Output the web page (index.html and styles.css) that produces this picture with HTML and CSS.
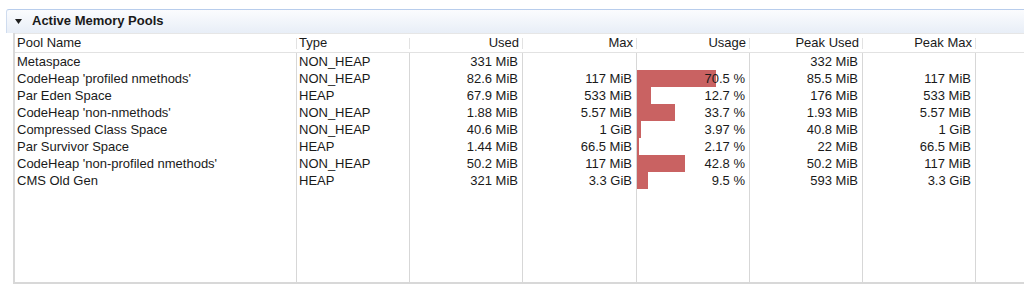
FILE: index.html
```html
<!DOCTYPE html>
<html>
<head>
<meta charset="utf-8">
<link rel="stylesheet" href="styles.css">
</head>
<body>
<div class="pools">
  <div class="section-head">
    <svg class="twisty" width="7" height="5" viewBox="0 0 7 5"><polygon points="0,0 7,0 3.5,5" fill="#1f1f1f"/></svg>
    <span class="title">Active Memory Pools</span>
  </div>
  <div class="table-box">
    <table class="grid">
      <colgroup>
        <col class="c-name"><col class="c-std"><col class="c-std"><col class="c-max"><col class="c-std"><col class="c-std"><col class="c-std"><col class="c-rest">
      </colgroup>
      <thead>
        <tr>
          <th class="l">Pool Name</th>
          <th class="l">Type</th>
          <th>Used</th>
          <th>Max</th>
          <th>Usage</th>
          <th>Peak Used</th>
          <th>Peak Max</th>
          <th class="last"></th>
        </tr>
      </thead>
      <tbody>
        <tr><td class="l">Metaspace</td><td class="l">NON_HEAP</td><td>331 MiB</td><td></td><td class="usage"></td><td>332 MiB</td><td></td><td class="last"></td></tr>
        <tr><td class="l">CodeHeap 'profiled nmethods'</td><td class="l">NON_HEAP</td><td>82.6 MiB</td><td>117 MiB</td><td class="usage"><div class="bar" style="width:70.5%"></div><span class="val">70.5 %</span></td><td>85.5 MiB</td><td>117 MiB</td><td class="last"></td></tr>
        <tr><td class="l">Par Eden Space</td><td class="l">HEAP</td><td>67.9 MiB</td><td>533 MiB</td><td class="usage"><div class="bar" style="width:12.7%"></div><span class="val">12.7 %</span></td><td>176 MiB</td><td>533 MiB</td><td class="last"></td></tr>
        <tr><td class="l">CodeHeap 'non-nmethods'</td><td class="l">NON_HEAP</td><td>1.88 MiB</td><td>5.57 MiB</td><td class="usage"><div class="bar" style="width:33.7%"></div><span class="val">33.7 %</span></td><td>1.93 MiB</td><td>5.57 MiB</td><td class="last"></td></tr>
        <tr><td class="l">Compressed Class Space</td><td class="l">NON_HEAP</td><td>40.6 MiB</td><td>1 GiB</td><td class="usage"><div class="bar" style="width:3.97%"></div><span class="val">3.97 %</span></td><td>40.8 MiB</td><td>1 GiB</td><td class="last"></td></tr>
        <tr><td class="l">Par Survivor Space</td><td class="l">HEAP</td><td>1.44 MiB</td><td>66.5 MiB</td><td class="usage"><div class="bar" style="width:2.17%"></div><span class="val">2.17 %</span></td><td>22 MiB</td><td>66.5 MiB</td><td class="last"></td></tr>
        <tr><td class="l">CodeHeap 'non-profiled nmethods'</td><td class="l">NON_HEAP</td><td>50.2 MiB</td><td>117 MiB</td><td class="usage"><div class="bar" style="width:42.8%"></div><span class="val">42.8 %</span></td><td>50.2 MiB</td><td>117 MiB</td><td class="last"></td></tr>
        <tr><td class="l">CMS Old Gen</td><td class="l">HEAP</td><td>321 MiB</td><td>3.3 GiB</td><td class="usage"><div class="bar" style="width:9.5%"></div><span class="val">9.5 %</span></td><td>593 MiB</td><td>3.3 GiB</td><td class="last"></td></tr>
        <tr class="filler"><td></td><td></td><td></td><td></td><td></td><td></td><td></td><td class="last"></td></tr>
      </tbody>
    </table>
  </div>
</div>
</body>
</html>
```

FILE: styles.css
```css
html, body {
  margin: 0;
  padding: 0;
  background: #ffffff;
}
body {
  width: 1024px;
  height: 287px;
  overflow: hidden;
  font-family: "Liberation Sans", Arial, sans-serif;
  font-size: 13px;
  color: #1a1a1a;
}
.pools {
  padding-top: 9px;
  padding-left: 6px;
}
.section-head {
  height: 21px;
  display: flex;
  align-items: center;
  padding-left: 8px;
  padding-bottom: 2px;
  border-top: 1px solid #b8cdec;
  border-left: 1px solid #cfdcef;
  border-top-left-radius: 3px;
  background: linear-gradient(#fbfcfe, #e8eef7);
}
.twisty {
  display: block;
  margin-right: 10px;
  margin-top: 1px;
}
.title {
  font-weight: bold;
  font-size: 13px;
  color: #1a1a1a;
}
.table-box {
  margin-left: 7px;
  width: 1040px;
  height: 249px;
  border-left: 2px solid #d8d8d8;
  border-bottom: 2px solid #d8d8d8;
  overflow: hidden;
}
.grid {
  border-collapse: separate;
  border-spacing: 0;
  table-layout: fixed;
  width: 1040px;
  height: 249px;
}
.c-name { width: 282px; }
.c-std { width: 113px; }
.c-max { width: 114px; }
.c-rest { width: auto; }
.grid th {
  height: 18px;
  padding: 0 4px 0 2px;
  font-weight: normal;
  text-align: right;
  line-height: 18px;
  border-top: 1px solid #e6e6e6;
  border-bottom: 1px solid #e2e2e2;
  background: linear-gradient(#e2e2e2, #e2e2e2) no-repeat right 0 top 4px / 1px 11px;
  white-space: nowrap;
  overflow: hidden;
}
.grid th.last {
  background: none;
}
.grid td {
  height: 17px;
  padding: 0 4px 0 2px;
  line-height: 17px;
  text-align: right;
  border-right: 1px solid #d7d7d7;
  white-space: nowrap;
  overflow: hidden;
}
.grid .l {
  text-align: left;
}
.grid td.last {
  border-right: none;
}
.grid tr.filler td {
  height: auto;
}
.grid td.usage {
  position: relative;
  padding-left: 0;
}
.bar {
  position: absolute;
  left: 0;
  top: 0;
  bottom: 0;
  background: #c96262;
}
.val {
  position: relative;
}
```
